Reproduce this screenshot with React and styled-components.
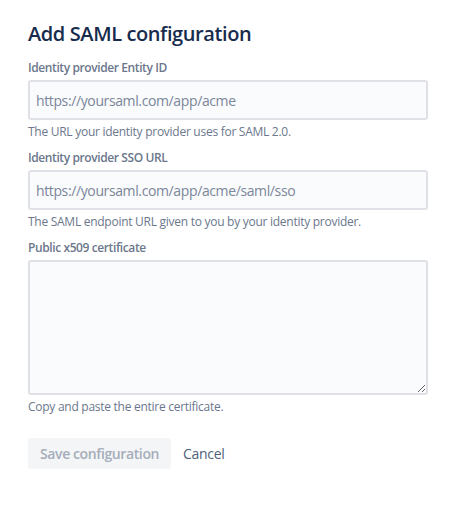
import React from 'react'
import styled, { createGlobalStyle } from 'styled-components'

const GlobalStyle = createGlobalStyle`
body {
  margin: 0;
  background: #FFFFFF;
  font-family: "Open Sans", "Noto Sans", sans-serif;
  color: #172B4D;
}
`

function App() {
  const fields = [
    {
      id: 'entity',
      label: 'Identity provider Entity ID',
      placeholder: 'https://yoursaml.com/app/acme',
      help: 'The URL your identity provider uses for SAML 2.0.',
    },
    {
      id: 'sso',
      label: 'Identity provider SSO URL',
      placeholder: 'https://yoursaml.com/app/acme/saml/sso',
      help: 'The SAML endpoint URL given to you by your identity provider.',
    },
  ]

  return (
    <>
      <GlobalStyle />
      <Page>
        <Title>Add SAML configuration</Title>
        {fields.map((field) => (
          <Field key={field.id}>
            <Label htmlFor={field.id}>{field.label}</Label>
            <Input id={field.id} placeholder={field.placeholder} />
            <Help>{field.help}</Help>
          </Field>
        ))}
        <Field>
          <Label htmlFor="cert">Public x509 certificate</Label>
          <TextArea id="cert" />
          <Help>Copy and paste the entire certificate.</Help>
        </Field>
        <Actions>
          <SaveButton disabled>Save configuration</SaveButton>
          <CancelButton>Cancel</CancelButton>
        </Actions>
      </Page>
    </>
  )
}

const Page = styled.div`
padding: 22px 34px 40px 28px;
width: 400px;
`
const Title = styled.h1`
margin: 0 0 14px 0;
font-size: 20px;
font-weight: 600;
line-height: 24px;
color: #172B4D;
letter-spacing: -0.4px;
`
const Field = styled.div`
display: flex;
flex-direction: column;
margin-bottom: 10px;
`
const Label = styled.label`
font-size: 12px;
font-weight: 600;
line-height: 16px;
color: #6B778C;
margin-bottom: 4px;
letter-spacing: -0.4px;
`
const Input = styled.input`
box-sizing: border-box;
height: 40px;
width: 100%;
padding: 0 6px;
border: 2px solid #DFE1E6;
border-radius: 3px;
background: #FAFBFC;
font-family: inherit;
font-size: 14px;
letter-spacing: -0.38px;
color: #172B4D;
outline: none;

&::placeholder {
  color: #7A869A;
}
`
const TextArea = styled.textarea`
box-sizing: border-box;
height: 135px;
width: 100%;
padding: 6px;
border: 2px solid #DFE1E6;
border-radius: 3px;
background: #FAFBFC;
font-family: inherit;
font-size: 14px;
color: #172B4D;
outline: none;
display: block;
`
const Help = styled.div`
font-size: 12px;
line-height: 16px;
color: #6B778C;
margin-top: 4px;
letter-spacing: -0.27px;
`
const Actions = styled.div`
display: flex;
align-items: center;
gap: 4px;
margin-top: 23px;
`
const SaveButton = styled.button`
height: 31px;
padding: 0 12px;
border: none;
border-radius: 3px;
background: #F4F5F7;
color: #A5ADBA;
font-family: inherit;
font-size: 14px;
font-weight: 600;
letter-spacing: -0.39px;
`
const CancelButton = styled.button`
height: 31px;
padding: 0 8px;
border: none;
background: transparent;
color: #505F79;
font-family: inherit;
font-size: 14px;
font-weight: 500;
letter-spacing: -0.3px;
`

export default App
